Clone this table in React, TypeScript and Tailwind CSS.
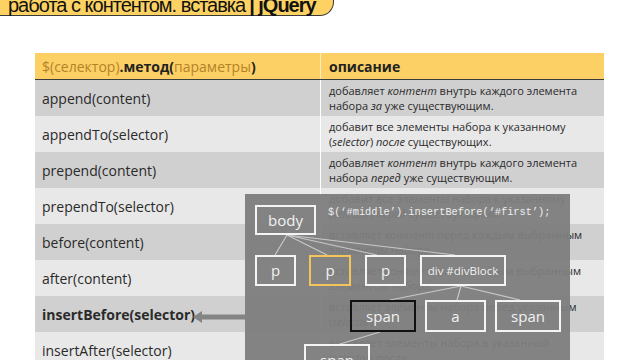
const rows: { m: string; d: React.ReactNode; bold?: boolean }[] = [
  {
    m: "append(content)",
    d: (
      <>
        добавляет <i>контент</i> внутрь каждого элемента набора <i>за</i> уже существующим.
      </>
    ),
  },
  {
    m: "appendTo(selector)",
    d: (
      <>
        добавит все элементы набора к указанному (<i>selector</i>) <i>после</i> существующих.
      </>
    ),
  },
  {
    m: "prepend(content)",
    d: (
      <>
        добавляет <i>контент</i> внутрь каждого элемента набора <i>перед</i> уже существующим.
      </>
    ),
  },
  {
    m: "prependTo(selector)",
    d: (
      <>
        добавит все элементы набора к указанному (<i>selector</i>) <i>перед</i> существующими.
      </>
    ),
  },
  {
    m: "before(content)",
    d: (
      <>
        вставляет <i>контент</i> перед каждым выбранным элементом набора.
      </>
    ),
  },
  {
    m: "after(content)",
    d: (
      <>
        вставляет <i>контент</i> после каждым выбранным элементом набора.
      </>
    ),
  },
  {
    m: "insertBefore(selector)",
    bold: true,
    d: (
      <>
        вставляет элементы набора перед указанным (<i>selector</i>).
      </>
    ),
  },
  {
    m: "insertAfter(selector)",
    d: (
      <>
        вставляет элементы набора в указанный (<i>selector</i>) после.
      </>
    ),
  },
];

function Node({
  label,
  x,
  y,
  w,
  h,
  tone = "white",
  small,
}: {
  label: string;
  x: number;
  y: number;
  w: number;
  h: number;
  tone?: "white" | "yellow" | "black";
  small?: boolean;
}) {
  const border =
    tone === "yellow"
      ? "border-[#f2c45a]"
      : tone === "black"
        ? "border-[#111111]"
        : "border-[#f4f4f4]";
  return (
    <div
      className={`absolute flex items-center justify-center border-2 ${border} text-[#f2f2f2] ${small ? "text-[11.5px]" : "text-[15px]"}`}
      style={{ left: x, top: y, width: w, height: h }}
    >
      {label}
    </div>
  );
}

function DomPanel() {
  // panel origin is (245,194) in page coords
  return (
    <div className="absolute left-[245px] top-[194px] h-[170px] w-[325px] bg-[#7d7d7d]/[0.95]">
      <svg className="absolute inset-0" width="325" height="170">
        <g stroke="#c8c8c8" strokeWidth="1.2">
          <line x1="42" y1="41" x2="30" y2="61" />
          <line x1="42" y1="41" x2="82" y2="61" />
          <line x1="42" y1="41" x2="132" y2="61" />
          <line x1="42" y1="41" x2="210" y2="61" />
          <line x1="216" y1="92" x2="145" y2="106" />
          <line x1="216" y1="92" x2="212" y2="106" />
          <line x1="216" y1="92" x2="275" y2="106" />
          <line x1="135" y1="138" x2="95" y2="150" />
        </g>
      </svg>
      <div className="absolute left-[83px] top-[11px] font-['Liberation_Mono',monospace] text-[10.3px] text-[#eeeeee]">
        $(‘#middle’).insertBefore(‘#first’);
      </div>
      <Node label="body" x={10} y={11} w={61} h={30} />
      <Node label="p" x={10} y={61} w={41} h={31} />
      <Node label="p" x={64} y={61} w={42} h={31} tone="yellow" />
      <Node label="p" x={120} y={61} w={41} h={31} />
      <Node label="div #divBlock" x={175} y={61} w={86} h={31} small />
      <Node label="span" x={105} y={106} w={66} h={32} tone="black" />
      <Node label="a" x={180} y={106} w={61} h={32} />
      <Node label="span" x={250} y={106} w={66} h={32} />
      <Node label="span" x={59} y={150} w={66} h={32} />
    </div>
  );
}

export default function App() {
  return (
    <div className="relative h-[360px] w-[640px] overflow-hidden bg-white font-['Open_Sans',sans-serif]">
      <div className="-mt-[26px] flex h-[42px] w-[334px] items-end whitespace-nowrap rounded-br-[14px] border-b-[1.5px] border-r-[1.5px] border-[#3a3a3a] bg-[#fdd262] pl-[8px] font-['Liberation_Sans',Arial,sans-serif] text-[20px] leading-none tracking-[-1px] text-[#111]">
        работа с контентом. вставка <b className="ml-[4px]">| jQuery</b>
      </div>

      <div className="ml-[35px] mt-[37px] w-[569px]">
        <div className="grid h-[27px] grid-cols-[285px_284px] border-b-[1.5px] border-[#3b3b3b] bg-[#fcd064] text-[14px] font-bold text-[#222]">
          <div className="flex items-center pl-[7px]">
            <span className="font-normal text-[#b5822a]">$(селектор)</span>
            <span>.метод(</span>
            <span className="font-normal text-[#b5822a]">параметры</span>
            <span>)</span>
          </div>
          <div className="flex items-center border-l border-white/60 pl-[8px]">описание</div>
        </div>
        {rows.map((r, i) => (
          <div
            key={r.m}
            className={`grid h-[36px] grid-cols-[285px_284px] ${i % 2 === 0 ? "bg-[#d0d0d0]" : "bg-[#e8e8e8]"}`}
          >
            <div className={`flex items-center pl-[7px] text-[14px] text-[#2a2a2a] ${r.bold ? "font-bold" : ""}`}>
              {r.m}
            </div>
            <div className="flex items-center border-l border-white pl-[8px] pr-[20px] text-[11px] leading-[15px] text-[#2a2a2a]">
              <span>{r.d}</span>
            </div>
          </div>
        ))}
      </div>

      <DomPanel />

      {/* arrow pointing to insertBefore row */}
      <svg className="absolute left-[193px] top-[310px]" width="54" height="14">
        <polygon points="0,7 9,1 9,4.5 54,4.5 54,9.5 9,9.5 9,13" fill="#848484" />
      </svg>
    </div>
  );
}
